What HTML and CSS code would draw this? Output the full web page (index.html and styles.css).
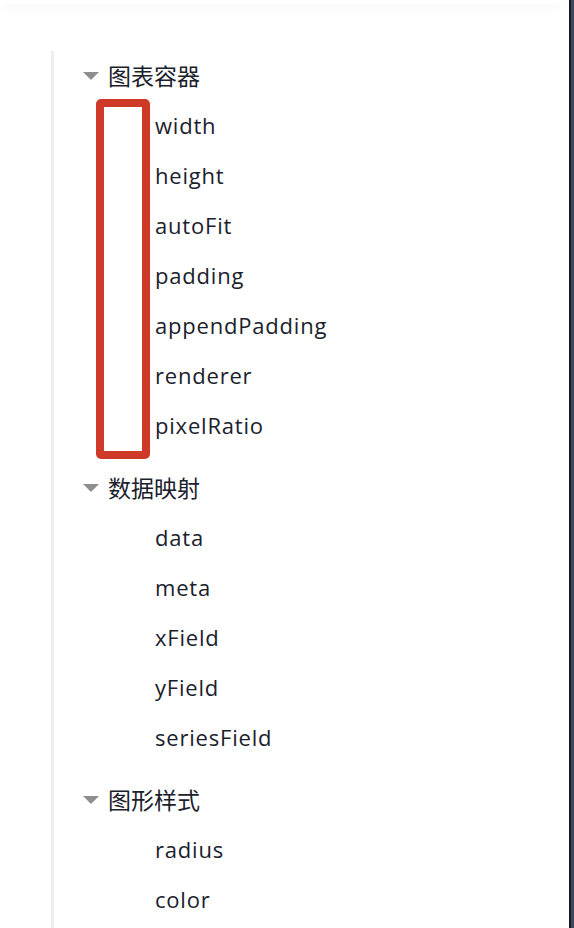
FILE: index.html
```html
<!DOCTYPE html>
<html lang="zh-CN">
<head>
  <meta charset="UTF-8">
  <meta name="viewport" content="width=device-width, initial-scale=1.0">
  <title>配置项</title>
  <link rel="stylesheet" href="styles.css">
</head>
<body>
  <div class="page">
    <div class="main">
      <div class="topbar"></div>

      <!-- Options tree -->
      <div class="tree">
        <div class="group">
          <div class="group-title"><span class="caret"></span>图表容器</div>
          <div class="item">width</div>
          <div class="item">height</div>
          <div class="item">autoFit</div>
          <div class="item">padding</div>
          <div class="item">appendPadding</div>
          <div class="item">renderer</div>
          <div class="item">pixelRatio</div>
          <div class="highlight"></div>
        </div>

        <div class="group">
          <div class="group-title"><span class="caret"></span>数据映射</div>
          <div class="item">data</div>
          <div class="item">meta</div>
          <div class="item">xField</div>
          <div class="item">yField</div>
          <div class="item">seriesField</div>
        </div>

        <div class="group">
          <div class="group-title"><span class="caret"></span>图形样式</div>
          <div class="item">radius</div>
          <div class="item">color</div>
        </div>
      </div>
    </div>
    <div class="edge"></div>
  </div>
</body>
</html>
```

FILE: styles.css
```css
html, body {
  height: 100%;
}
body {
  margin: 0;
  background: #ffffff;
  color: #1a212c;
  font-family: "Open Sans", "Noto Sans CJK SC", sans-serif;
  overflow: hidden;
}
.page {
  display: flex;
  height: 100%;
}
.main {
  flex: 1;
  overflow: hidden;
}
.edge {
  width: 5px;
  background: #3f4b5c;
  border-left: 2px solid #161b25;
  box-sizing: border-box;
}
.topbar {
  height: 4px;
  margin-right: 8px;
  background: #ffffff;
  box-shadow: 0 3px 10px rgba(0, 0, 0, 0.05);
}
.tree {
  margin: 47px 0 0 51px;
  border-left: 3px solid #eeeeee;
  min-height: 900px;
}
.group {
  position: relative;
  margin-bottom: 12px;
}
.group-title {
  display: flex;
  align-items: center;
  box-sizing: border-box;
  height: 50px;
  padding: 0 0 3px 29px;
  font-family: "Noto Sans CJK SC", sans-serif;
  font-size: 23px;
}
.caret {
  width: 0;
  height: 0;
  margin: 2px 9px 0 0;
  border-left: 8px solid transparent;
  border-right: 8px solid transparent;
  border-top: 8px solid #8e8e8e;
}
.item {
  height: 50px;
  line-height: 48px;
  padding-left: 101px;
  font-size: 22px;
  letter-spacing: 0.8px;
}
.highlight {
  position: absolute;
  top: 48px;
  left: 42px;
  width: 54px;
  height: 360px;
  box-sizing: border-box;
  border: 8px solid #cf3a28;
  border-radius: 5px;
}
```
